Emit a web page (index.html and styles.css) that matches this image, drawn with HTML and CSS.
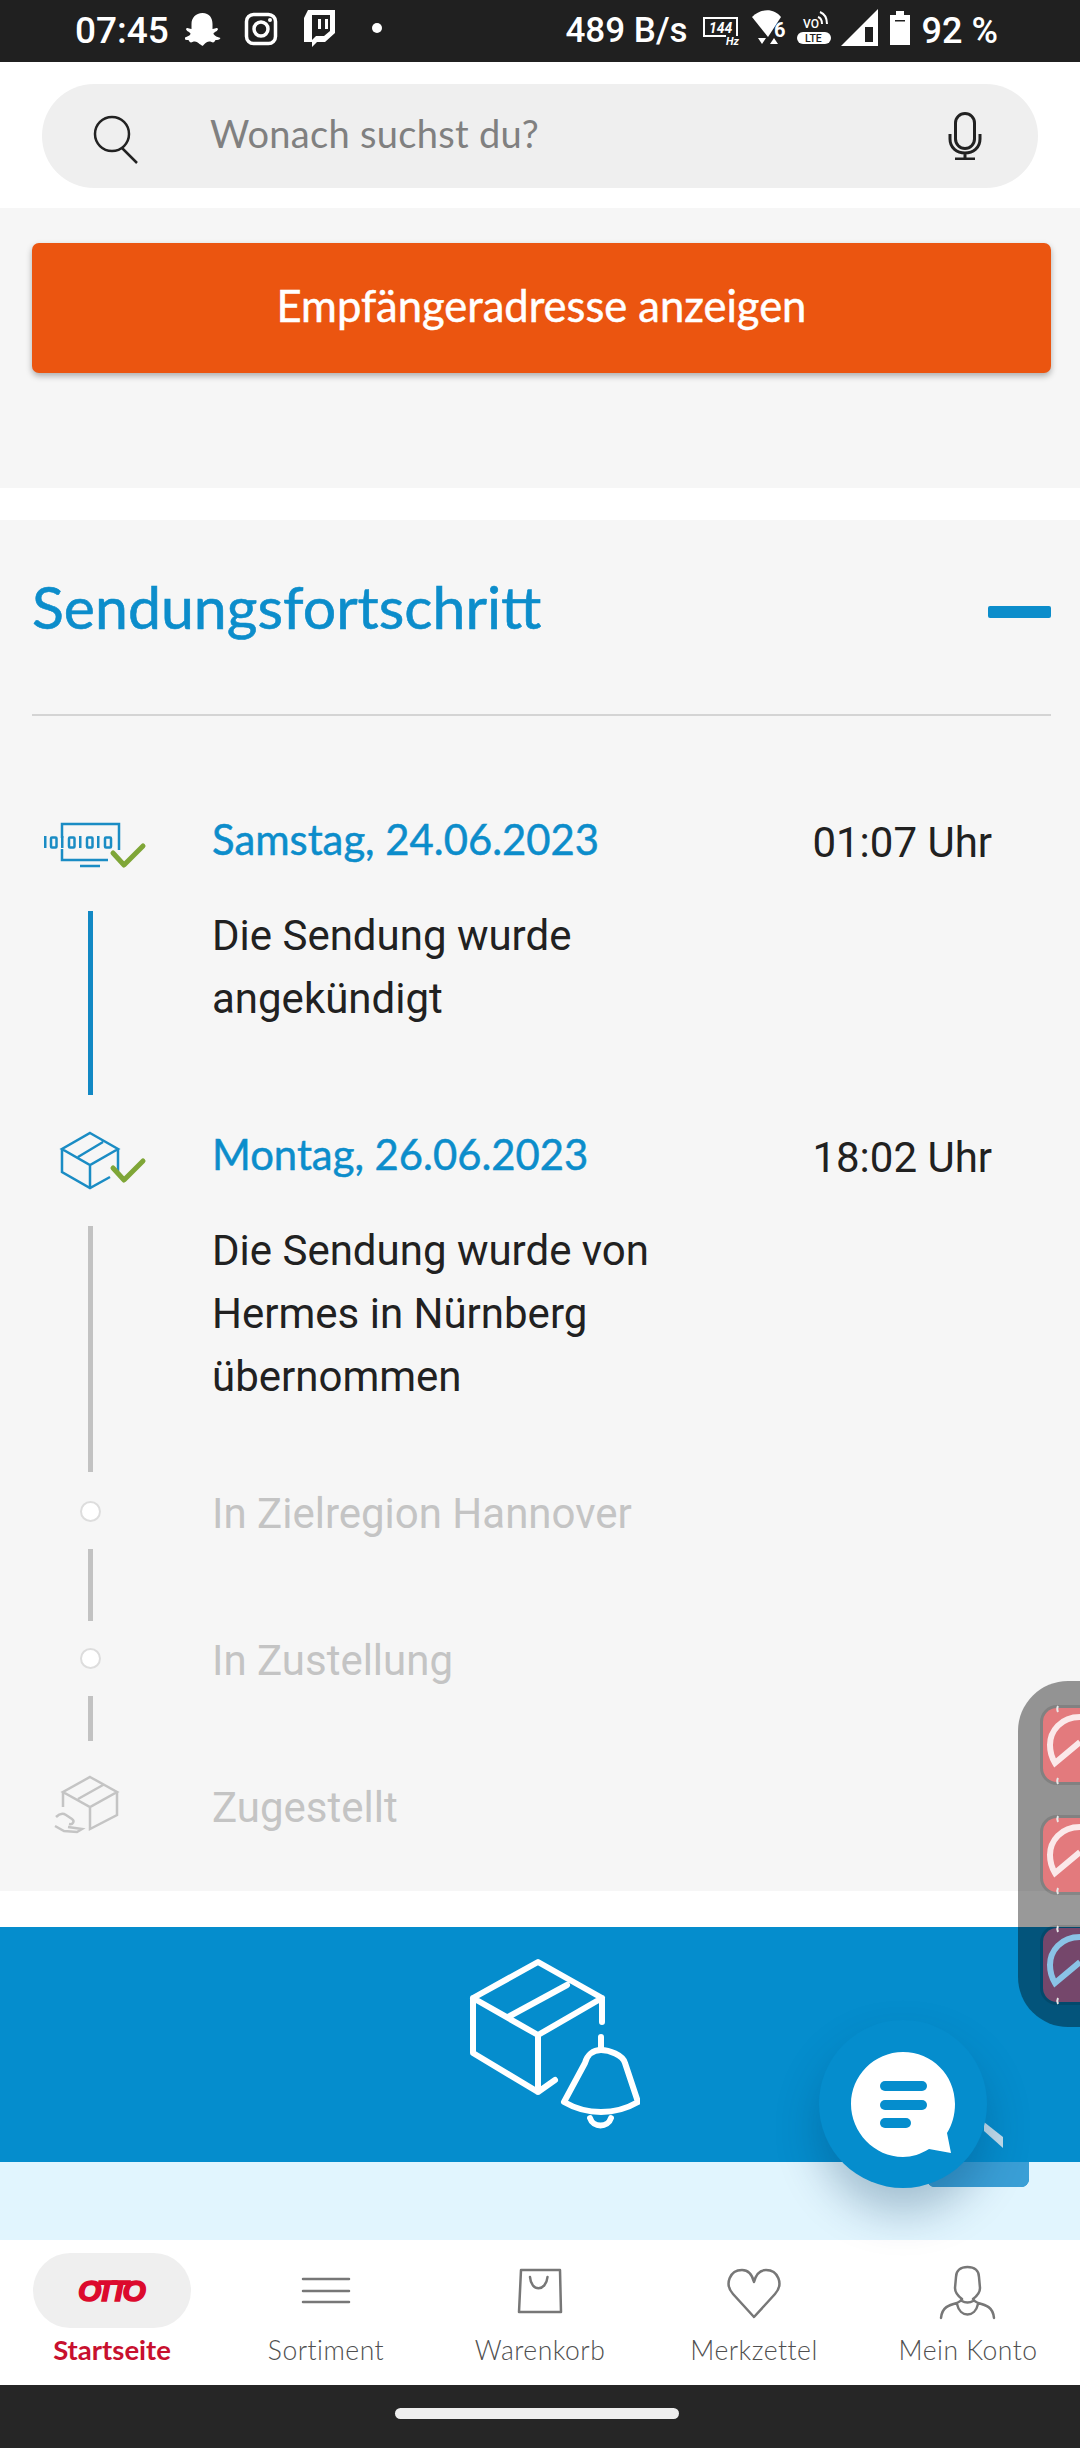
FILE: index.html
```html
<!DOCTYPE html>
<html lang="de">
<head>
<meta charset="utf-8">
<title>Sendungsfortschritt</title>
<link rel="stylesheet" href="styles.css">
</head>
<body>
<div class="screen">
  <header class="statusbar">
    <span class="status-text time">07:45</span>
    <svg class="status-left" viewBox="185 0 197 62">
      <path class="wh" d="M202.500 13c7 0 10 5 10 11v5c2 0 3-1 4-1 1 0 2 1 1 2-1 2-4 2-4 4 1 2 4 3 7 4-1 2-3 2-5 2-1 2-2 3-4 2-3-1-5 0-7 2-1 1-2 2-2 2s-1-1-3-2c-2-2-4-3-7-2-2 1-3 0-4-2-2 0-4 0-5-2 3-1 6-2 7-4 0-2-3-2-4-4-1-1 0-2 1-2 1 0 2 1 4 1v-5c0-6 4-11 11-11z"/>
      <rect class="ln" x="246.500" y="14.500" width="29" height="29" rx="7"/>
      <circle class="ln" cx="261" cy="29" r="7"/>
      <circle class="wh" cx="270" cy="20" r="2"/>
      <path class="wh" d="M308 10h27v23l-10 9h-8l-5 5v-5h-8V18z"/>
      <path class="dk" d="M312 15h18v16l-6 5h-8l-4 4v-4h-0z"/>
      <rect class="wh" x="318" y="19" width="3" height="10"/>
      <rect class="wh" x="325" y="19" width="3" height="10"/>
      <circle class="wh" cx="377" cy="28" r="5"/>
    </svg>
    <div class="status-right">
      <span class="status-text status-speed">489 B/s</span>
      <svg class="status-icons" viewBox="703 0 207 62">
        <path class="ln thin" d="M737 36V18h-33v18h22"/>
        <text class="st-144" x="709" y="33">144</text>
        <text class="st-hz" x="726" y="45">Hz</text>
        <path class="wh" d="M752 17c9-9 22-9 29 0l-13 20z"/>
        <text class="st-six" x="774" y="37">6</text>
        <path class="wh" d="M758 38h8l-4 6zM770 44h8l-4-6z"/>
        <text class="st-vo" x="803" y="28">VO</text>
        <path class="ln thin" d="M818 17c3 1 4 3 4 7M820 12c5 2 7 6 7 12"/>
        <rect class="wh" x="797" y="32" width="34" height="12" rx="6"/>
        <text class="st-lte" x="805" y="42">LTE</text>
        <path class="wh" d="M841 46l37-37v37z"/>
        <rect class="dk" x="865" y="27" width="8" height="15"/>
        <path class="wh" d="M896 11h8v4h6v30h-20V15h6z"/>
        <rect class="dk" x="895" y="20" width="10" height="1.500"/>
      </svg>
      <span class="status-text status-battery">92 %</span>
    </div>
  </header>

  <div class="searchbar">
    <div class="search-pill">
      <svg class="search-icon" viewBox="0 0 46 50">
        <circle cx="19" cy="19" r="17"/>
        <path d="M29 33l15 15"/>
      </svg>
      <span class="search-text">Wonach suchst du?</span>
      <svg class="mic-icon" viewBox="0 0 34 48">
        <rect x="7.500" y="1.500" width="19" height="35" rx="9.500"/>
        <path d="M2 22v5c0 9 7 14 15 14s15-5 15-14v-5M17 41v6M7 47h20"/>
      </svg>
    </div>
  </div>

  <section class="action-panel">
    <button class="action-button"><span class="action-label">Empfängeradresse anzeigen</span></button>
  </section>

  <section class="tracking">
    <div class="tracking-head">
      <h2 class="tracking-title">Sendungsfortschritt</h2>
      <span class="collapse-bar"></span>
    </div>
    <ol class="timeline">
      <li class="step step-1">
        <div class="mark">
          <svg class="mark-icon icon-large" viewBox="0 808 116 103">
            <g class="blue-line">
              <path d="M30 838V824H87V850M30 849V860H76M48 866H68"/>
              <rect x="19" y="837.500" width="5.500" height="10" rx="1"/>
              <rect x="37" y="837.500" width="5.500" height="10" rx="1"/>
              <rect x="55" y="837.500" width="5.500" height="10" rx="1"/>
              <rect x="73" y="837.500" width="6" height="10" rx="1"/>
            </g>
            <g class="blue-fill">
              <rect x="12" y="836" width="2.500" height="12"/>
              <rect x="29" y="836" width="2.500" height="12"/>
              <rect x="47" y="836" width="2.500" height="12"/>
              <rect x="65" y="836" width="2.500" height="12"/>
            </g>
            <path class="check" d="M81 853l11 12 19-19"/>
          </svg>
          <span class="connector connector-done connector-a"></span>
        </div>
        <div class="step-body">
          <h3 class="step-date">Samstag, 24.06.2023</h3>
          <p class="step-text">Die Sendung wurde<br>angekündigt</p>
        </div>
        <span class="step-time">01:07 Uhr</span>
      </li>
      <li class="step step-2">
        <div class="mark">
          <svg class="mark-icon icon-large" viewBox="0 1123 116 103">
            <g class="blue-line">
              <path d="M58 1133l28 16-28 16-28-16zM46 1157l25-15M30 1149v23l28 16 20-11M58 1165v23M86 1149v22"/>
            </g>
            <path class="check" d="M81 1168l11 12 19-19"/>
          </svg>
          <span class="connector connector-b"></span>
        </div>
        <div class="step-body">
          <h3 class="step-date">Montag, 26.06.2023</h3>
          <p class="step-text">Die Sendung wurde von<br>Hermes in Nürnberg<br>übernommen</p>
        </div>
        <span class="step-time">18:02 Uhr</span>
      </li>
      <li class="step step-3">
        <div class="mark">
          <span class="dot"></span>
          <span class="connector connector-c"></span>
        </div>
        <div class="step-body"><p class="step-pending">In Zielregion Hannover</p></div>
      </li>
      <li class="step step-3">
        <div class="mark">
          <span class="dot"></span>
          <span class="connector connector-d"></span>
        </div>
        <div class="step-body"><p class="step-pending">In Zustellung</p></div>
      </li>
      <li class="step step-5">
        <div class="mark">
          <svg class="mark-icon icon-small" viewBox="0 1776 116 70">
            <g class="gray-line">
              <path d="M58 1777l27 15-27 15-27-15zM46 1799l25-14M31 1792v15M58 1807v22l27-14v-23"/>
              <path d="M24 1817c3-3 7-4 10-2l6 4c3 2 1 6-3 5M23 1826l9 5 13 1 5-3-14-2"/>
            </g>
          </svg>
        </div>
        <div class="step-body"><p class="step-pending">Zugestellt</p></div>
      </li>
    </ol>
  </section>

  <section class="banner">
    <svg class="banner-icon" viewBox="440 1945 200 200">
      <path d="M538 1962l64 36-64 37-65-37zM508 2017l59-32M473 1998v55l65 39 17-12M538 2035v57M602 1998v24"/>
      <path d="M601 2037v11M601 2050c-8 0-14 5-16 13l-21 39c12 7 25 10 37 10s25-3 37-10l-13-39c-2-8-16-13-24-13zM590 2118c3 10 18 10 21 0"/>
    </svg>
  </section>
  <div class="promo-strip"></div>

  <nav class="bottom-nav">
    <a class="nav-item nav-active">
      <span class="nav-pill"><span class="otto-logo">OTTO</span></span>
      <span class="nav-label">Startseite</span>
    </a>
    <a class="nav-item">
      <svg class="nav-icon" viewBox="294 2258 64 64"><path d="M303 2279h46M303 2291h46M303 2302h46"/></svg>
      <span class="nav-label">Sortiment</span>
    </a>
    <a class="nav-item">
      <svg class="nav-icon" viewBox="508 2258 64 64"><path d="M521 2270h39l1 42h-42zM530 2277c1 15 16 15 17.500 0"/></svg>
      <span class="nav-label">Warenkorb</span>
    </a>
    <a class="nav-item">
      <svg class="nav-icon" viewBox="722 2258 64 64"><path d="M754 2317l-21-23c-9-10-3-24 9-24 6 0 10 4 12 12 2-8 6-12 12-12 12 0 18 14 9 24z"/></svg>
      <span class="nav-label">Merkzettel</span>
    </a>
    <a class="nav-item">
      <svg class="nav-icon" viewBox="936 2258 64 64"><path d="M962 2299c-4-3-7-7-7-11l1-11c0-7 5-10 11.500-10s11.500 3 11.500 10l1 11c0 4-3 8-7 11 1 2 3 3 5 4 8 2 15 4 16 15M962 2299c-1 2-3 3-5 4-8 2-15 4-16 15M957 2304c3 14 18 14 21 0M962 2301c3 2 8 2 11 0"/></svg>
      <span class="nav-label">Mein Konto</span>
    </a>
  </nav>

  <footer class="homebar"><span class="home-indicator"></span></footer>

  <aside class="side-dock">
    <div class="dock-tile">
      <svg viewBox="0 1 37 74"><path class="arc" d="M37 10C18 10 7 24 7 38c0 7 2 13 5 18l25-21"/><path class="tick" d="M15 -1c-1 2-1 4 0 6M15 71c-1 2-1 4 0 6"/></svg>
    </div>
    <div class="dock-tile">
      <svg viewBox="0 1 37 74"><path class="arc" d="M37 10C18 10 7 24 7 38c0 7 2 13 5 18l25-21"/><path class="tick" d="M15 -1c-1 2-1 4 0 6M15 71c-1 2-1 4 0 6"/></svg>
    </div>
    <div class="dock-tile dock-tile-dark">
      <svg viewBox="0 1 37 74"><path class="arc" d="M37 10C18 10 7 24 7 38c0 7 2 13 5 18l25-21"/><path class="tick" d="M15 -1c-1 2-1 4 0 6M15 71c-1 2-1 4 0 6"/></svg>
    </div>
  </aside>

  <div class="top-button">
    <span class="top-wedge"></span>
  </div>
  <button class="chat-fab" aria-label="Chat">
    <svg viewBox="0 0 168 168">
      <path class="bubble" d="M84 32c29 0 52 23 52 52 0 11-3 21-8 29l4 20-22-4c-8 5-17 8-26 8-29 0-52-25-52-53s23-52 52-52z"/>
      <rect class="bar" x="61" y="61" width="47" height="10" rx="5"/>
      <rect class="bar" x="61" y="80" width="47" height="10" rx="5"/>
      <rect class="bar" x="61" y="98" width="31" height="10" rx="5"/>
    </svg>
  </button>
</div>
</body>
</html>
```
FILE: styles.css
```css
* { box-sizing: border-box; }
html, body { margin: 0; padding: 0; }
body { background: #fff; font-family: Roboto, "Noto Sans", sans-serif; }
.screen { position: relative; width: 1080px; height: 2448px; overflow: hidden; display: flex; flex-direction: column; }

/* status bar */
.statusbar { height: 62px; background: #202020; display: flex; align-items: center; padding: 0 82px 0 75px; }
.status-text { color: #fff; font-size: 37px; font-weight: 500; line-height: 62px; white-space: nowrap; }
.status-speed { font-size: 35px; margin-right: 3px; }
.status-battery { font-size: 36px; }
.time { width: 110px; }
.status-left { width: 197px; height: 62px; }
.status-right { margin-left: auto; display: flex; align-items: center; gap: 12px; }
.status-icons { width: 207px; height: 62px; }
.wh { fill: #fff; }
.dk { fill: #202020; }
.ln { fill: none; stroke: #fff; stroke-width: 3.5; }
.ln.thin { stroke-width: 2; }
.st-144 { fill: #fff; font: italic 700 14px Roboto, sans-serif; }
.st-hz { fill: #fff; font: italic 700 11px Roboto, sans-serif; }
.st-six { fill: #fff; font: 700 20px Roboto, sans-serif; }
.st-vo { fill: #fff; font: 500 12px Roboto, sans-serif; }
.st-lte { fill: #202020; font: 500 10.500px Roboto, sans-serif; }

/* search */
.searchbar { height: 146px; padding: 22px 42px 20px; background: #fff; }
.search-pill { height: 104px; border-radius: 52px; background: #efefef; display: flex; align-items: center; padding: 0 56px 0 51px; }
.search-icon { width: 46px; height: 50px; fill: none; stroke: #222; stroke-width: 2.500; margin-top: 8px; }
.search-text { margin: 0 0 6px 71px; font-family: Lato, sans-serif; font-size: 38px; color: #808080; letter-spacing: 0.3px; }
.mic-icon { margin-left: auto; width: 34px; height: 48px; fill: none; stroke: #222; stroke-width: 3; }

/* button section */
.action-panel { height: 280px; background: #f6f6f6; padding: 35px 29px 0 32px; }
.action-button { display: block; width: 100%; height: 130px; padding: 0 0 7px; border: 0; border-radius: 7px; background: #eb5510; color: #fff; font-family: Lato, sans-serif; font-size: 43.500px; font-weight: 400; box-shadow: 0 3px 6px rgba(0,0,0,.3); }
.action-label { -webkit-text-stroke: 0.5px #fff; }

/* tracking */
.tracking { margin-top: 32px; height: 1371px; background: #f6f6f6; padding: 0 29px 0 32px; }
.tracking-head { height: 196px; padding-bottom: 22px; border-bottom: 2px solid #d4d4d4; display: flex; align-items: center; justify-content: space-between; }
.tracking-title { margin: 0; color: #0c8dcb; font-family: Lato, sans-serif; font-size: 59px; font-weight: 400; -webkit-text-stroke: 0.6px #0c8dcb; }
.collapse-bar { width: 63px; height: 12px; margin-top: 12px; background: #0c8dcb; border-radius: 2px; }

.timeline { list-style: none; margin: 0; padding: 92px 0 0; }
.step { display: flex; }
.step-1 { height: 315px; }
.step-2 { height: 359px; }
.step-3 { height: 147px; }
.step-5 { height: 115px; }
.mark { width: 116px; flex: none; display: flex; flex-direction: column; align-items: center; }
.mark-icon { display: block; width: 116px; flex: none; overflow: visible; }
.icon-large { height: 103px; }
.icon-small { height: 70px; }
.blue-line { fill: none; stroke: #1a8cc4; stroke-width: 2.500; }
.blue-fill { fill: #1a8cc4; }
.gray-line { fill: none; stroke: #c4c4c4; stroke-width: 2.500; }
.check { fill: none; stroke: #7fa637; stroke-width: 5; stroke-linecap: round; stroke-linejoin: round; }
.connector { display: block; width: 5px; background: #c2c2c2; flex: none; }
.connector-done { background: #1288c4; }
.connector-a { height: 184px; }
.connector-b { height: 246px; }
.connector-c { height: 72px; margin-top: 27px; }
.connector-d { height: 45px; margin-top: 27px; }
.dot { display: block; flex: none; width: 21px; height: 21px; margin-top: 19px; border-radius: 50%; background: #fff; border: 2px solid #ddd; }
.step-body { margin-left: 64px; flex: 1; }
.step-date { margin: 0 0 33px; color: #0c8dcb; font-family: Lato, sans-serif; font-size: 41.800px; font-weight: 400; -webkit-text-stroke: 0.5px #0c8dcb; line-height: 63px; }
.step-text { margin: 0; color: #212121; font-size: 42px; line-height: 63px; }
.step-pending { margin: 0; color: #c4c4c4; font-size: 42px; line-height: 63px; }
.step-time { color: #212121; font-size: 42px; line-height: 69px; padding-right: 59px; }

/* banner */
.banner { margin-top: 36px; height: 235px; background: #058dcd; display: flex; justify-content: center; padding-top: 18px; }
.banner-icon { width: 200px; height: 200px; fill: none; stroke: #fff; stroke-width: 6; stroke-linecap: round; stroke-linejoin: round; }
.promo-strip { height: 78px; background: #e1f5fe; }

/* bottom nav */
.bottom-nav { height: 145px; background: #fff; display: grid; grid-template-columns: repeat(5, 214px); padding: 13px 5px 0; }
.nav-item { display: flex; flex-direction: column; align-items: center; }
.nav-pill { width: 158px; height: 75px; border-radius: 38px; background: #efefef; display: flex; align-items: center; justify-content: center; }
.otto-logo { font-family: "Liberation Sans", sans-serif; font-style: italic; font-weight: 700; font-size: 30px; letter-spacing: -5px; padding-right: 5px; color: #dc0a2d; -webkit-text-stroke: 1.5px #dc0a2d; }
.nav-icon { display: block; width: 64px; height: 64px; margin: 5px 0 6px; fill: none; stroke: #777; stroke-width: 2.500; stroke-linejoin: round; stroke-linecap: round; }
.nav-label { font-family: Lato, sans-serif; font-size: 26.500px; font-weight: 300; line-height: 44px; color: #4f4f4f; letter-spacing: 0.5px; white-space: nowrap; }
.nav-active .nav-label { color: #c8102e; font-size: 27.500px; font-weight: 700; letter-spacing: 0; }

.homebar { height: 63px; background: #262626; display: flex; justify-content: center; padding: 23px 6px 0 0; }
.home-indicator { width: 284px; height: 11px; border-radius: 6px; background: #eee; }

/* overlays */
.side-dock { position: absolute; top: 1681px; right: 0; width: 62px; height: 346px; border-radius: 50px 0 0 50px; background: rgba(0,0,0,.4); padding: 24px 0 0 22px; display: flex; flex-direction: column; gap: 30px; overflow: hidden; }
.dock-tile { flex: none; width: 64px; height: 80px; border: 3px solid rgba(0,0,0,.12); border-right: 0; border-radius: 17px 0 0 17px; background: #e37a7d; background-clip: padding-box; }
.dock-tile svg { display: block; width: 37px; height: 74px; overflow: visible; }
.arc { fill: none; stroke: #fbe9ea; stroke-width: 6; }
.tick { fill: none; stroke: #e8e8e8; stroke-width: 2; }
.dock-tile-dark { background-color: #75476b; }
.dock-tile-dark .arc { stroke: #8ac3e6; }
.top-button { position: absolute; left: 927px; top: 2100px; width: 102px; height: 87px; background: #058dcd; border-radius: 0 0 8px 8px; }
.top-button::after { content: ""; position: absolute; left: 0; right: 0; bottom: 0; height: 25px; background: #3a9fd6; border-radius: 0 0 8px 8px; }
.top-wedge { position: absolute; left: 57px; top: 22px; width: 19px; height: 26px; background: #c5dfee; clip-path: polygon(0 0, 100% 58%, 100% 100%, 0 35%); }
.chat-fab { position: absolute; left: 819px; top: 2020px; width: 168px; height: 168px; padding: 0; border: 0; border-radius: 50%; background: #058dcd; box-shadow: 0 24px 44px rgba(0,50,90,.28); }
.chat-fab svg { display: block; width: 168px; height: 168px; }
.bubble { fill: #fff; }
.bar { fill: #058dcd; }
```
